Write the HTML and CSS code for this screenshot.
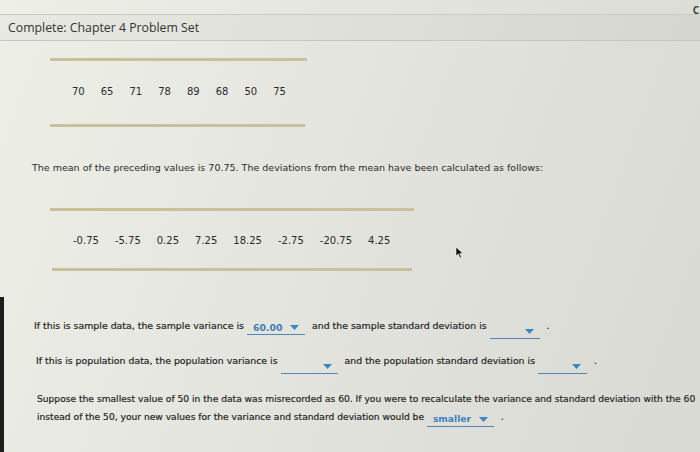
FILE: index.html
```html
<!DOCTYPE html>
<html>
<head>
<meta charset="utf-8">
<link rel="stylesheet" href="styles.css">
</head>
<body>
<div class="page">
  <div class="header">Complete: Chapter 4 Problem Set</div>
  <span class="corner">C</span>
  <div class="rule rule1"></div>
  <div class="row nums">
    <span>70</span><span>65</span><span>71</span><span>78</span><span>89</span><span>68</span><span>50</span><span>75</span>
  </div>
  <div class="rule rule2"></div>
  <p class="mean">The mean of the preceding values is 70.75. The deviations from the mean have been calculated as follows:</p>
  <div class="rule rule3"></div>
  <div class="row devs">
    <span>-0.75</span><span>-5.75</span><span>0.25</span><span>7.25</span><span>18.25</span><span>-2.75</span><span>-20.75</span><span>4.25</span>
  </div>
  <div class="rule rule4"></div>
  <svg class="cursor" width="9" height="13" viewBox="0 0 9 13"><path d="M1 1 L1 10 L3.3 8 L5 12 L6.5 11.3 L4.8 7.5 L8 7.5 Z" fill="#111" stroke="#fff" stroke-width="0.6"/></svg>
  <div class="lower">
    <p class="q q1">If this is sample data, the sample variance is <span class="dd dd1"><span class="val">60.00</span><svg class="tri" width="9" height="5" viewBox="0 0 9 5"><path d="M0 0 H9 L4.5 5 Z" fill="#3c86c4"/></svg></span> and the sample standard deviation is <span class="dd dd2"><span class="val"></span><svg class="tri" width="9" height="5" viewBox="0 0 9 5"><path d="M0 0 H9 L4.5 5 Z" fill="#3c86c4"/></svg></span> .</p>
    <p class="q q2">If this is population data, the population variance is <span class="dd dd3"><span class="val"></span><svg class="tri" width="9" height="5" viewBox="0 0 9 5"><path d="M0 0 H9 L4.5 5 Z" fill="#3c86c4"/></svg></span> and the population standard deviation is <span class="dd dd4"><span class="val"></span><svg class="tri" width="9" height="5" viewBox="0 0 9 5"><path d="M0 0 H9 L4.5 5 Z" fill="#3c86c4"/></svg></span> .</p>
    <p class="q q3">Suppose the smallest value of 50 in the data was misrecorded as 60. If you were to recalculate the variance and standard deviation with the 60<br>instead of the 50, your new values for the variance and standard deviation would be <span class="dd dd5"><span class="val">smaller</span><svg class="tri" width="9" height="5" viewBox="0 0 9 5"><path d="M0 0 H9 L4.5 5 Z" fill="#3c86c4"/></svg></span> .</p>
  </div>
</div>
</body>
</html>
```
FILE: styles.css
```css
html, body {
  margin: 0;
  padding: 0;
}
body {
  width: 700px;
  height: 452px;
  overflow: hidden;
  background: linear-gradient(110deg, #eef0e8 0%, #e6e7e0 35%, #dfdfd9 70%, #dadad4 100%);
  font-family: "DejaVu Sans", Verdana, sans-serif;
  color: #2b2b2b;
}
.page {
  position: relative;
  height: 452px;
  display: flex;
  flex-direction: column;
}
.header {
  margin-top: 14px;
  height: 25px;
  line-height: 25px;
  border-top: 1px solid #c9cac3;
  border-bottom: 1px solid #c6c7c0;
  background: rgba(120, 120, 110, 0.05);
  padding-left: 8px;
  font-family: "Open Sans", sans-serif;
  font-size: 12.3px;
  color: #333;
}
.corner {
  position: absolute;
  right: 1px;
  top: 3px;
  font-family: "Open Sans", sans-serif;
  font-size: 10px;
  font-weight: bold;
  color: #2f4a2a;
}
.rule {
  height: 3px;
  background: #c8c19b;
  flex: none;
}
.rule1 { margin: 17px 0 0 50px; width: 257px; }
.rule2 { margin: 22px 0 0 50px; width: 255px; }
.rule3 { margin: 33px 0 0 50px; width: 364px; }
.rule4 { margin: 17px 0 0 52px; width: 360px; }
.row {
  display: flex;
  height: 20px;
  line-height: 20px;
  font-size: 10px;
  color: #2a2a2a;
}
.nums { margin: 21px 0 0 72px; gap: 16px; }
.devs { margin: 20px 0 0 73px; gap: 16px; }
.mean {
  margin: 34px 0 0 32px;
  line-height: 14px;
  font-size: 9.5px;
  white-space: nowrap;
}
.cursor {
  position: absolute;
  left: 455px;
  top: 246px;
}
.lower {
  margin-top: 26px;
  padding-top: 22px;
  border-left: 4px solid #1e1e1e;
  flex: 1;
}
.q {
  margin: 0;
  font-size: 9.4px;
  line-height: 14px;
  height: 14px;
  white-space: nowrap;
  color: #262626;
  -webkit-text-stroke: 0.2px #262626;
}
.q1 { margin-left: 30px; }
.q2 { margin: 21px 0 0 32px; }
.q3 { margin: 22px 0 0 33px; line-height: 18px; height: 36px; font-size: 9.15px; }
.dd {
  display: inline-flex;
  align-items: center;
  justify-content: space-between;
  height: 11px;
  line-height: 11px;
  padding: 0 6px 1px 6px;
  margin-right: 4px;
  border-bottom: 1px solid #4f88b8;
  color: #3d80b8;
  font-weight: bold;
  -webkit-text-stroke: 0;
  vertical-align: -2px;
}
.dd1 { width: 46px; }
.dd2 { width: 38px; }
.dd3 { width: 45px; }
.dd4 { width: 37px; }
.dd5 { width: 55px; }
.tri { flex: none; }
```
